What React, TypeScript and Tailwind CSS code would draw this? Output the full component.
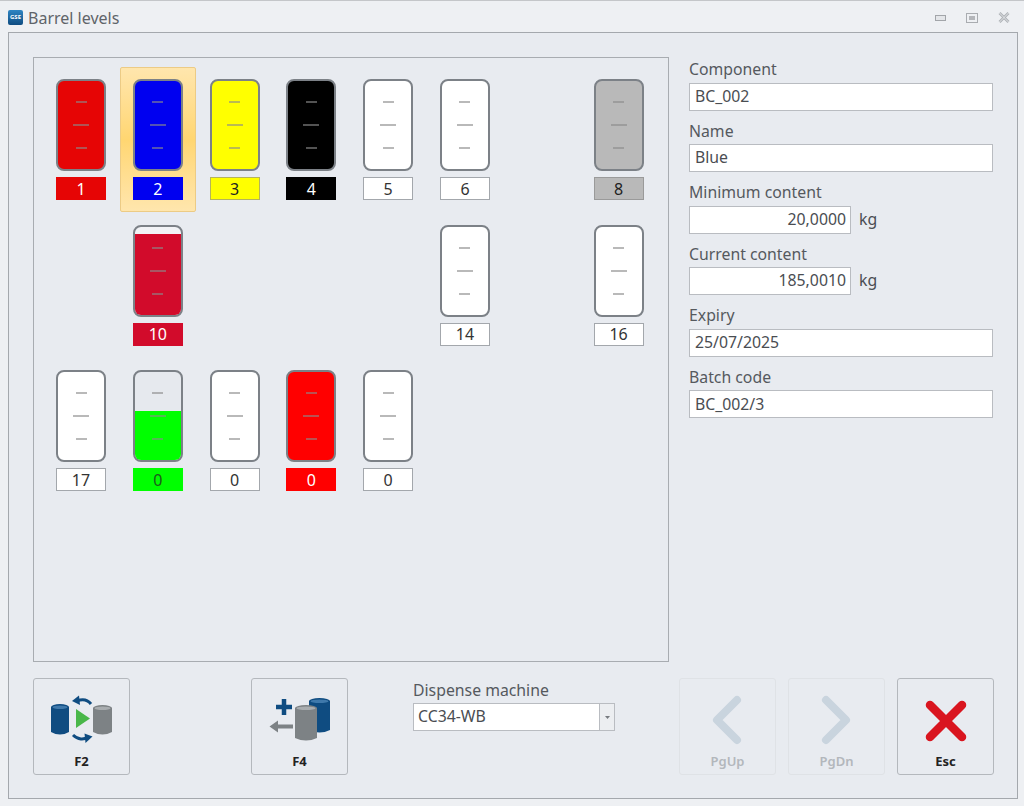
import React from "react";

type B = { col: number; label: string; color: string; text: string; fill?: number; selected?: boolean; emptyBg?: string };

const rows: (B | null)[][] = [
  [
    { col: 0, label: "1", color: "#e60505", text: "#ffffff" },
    { col: 1, label: "2", color: "#0000f0", text: "#ffffff", selected: true },
    { col: 2, label: "3", color: "#ffff00", text: "#222222" },
    { col: 3, label: "4", color: "#000000", text: "#ffffff" },
    { col: 4, label: "5", color: "#ffffff", text: "#333333" },
    { col: 5, label: "6", color: "#ffffff", text: "#333333" },
    null,
    { col: 7, label: "8", color: "#b9b9b9", text: "#222222" },
  ],
  [
    null,
    { col: 1, label: "10", color: "#d20b2b", text: "#ffffff", fill: 91, emptyBg: "#f2f3f6" },
    null,
    null,
    null,
    { col: 5, label: "14", color: "#ffffff", text: "#333333" },
    null,
    { col: 7, label: "16", color: "#ffffff", text: "#333333" },
  ],
  [
    { col: 0, label: "17", color: "#ffffff", text: "#333333" },
    { col: 1, label: "0", color: "#00ff00", text: "#1c5a1c", fill: 56, emptyBg: "#e6e9ee" },
    { col: 2, label: "0", color: "#ffffff", text: "#333333" },
    { col: 3, label: "0", color: "#ff0000", text: "#ffffff" },
    { col: 4, label: "0", color: "#ffffff", text: "#333333" },
    null,
    null,
    null,
  ],
];

function labelBorder(c: string) {
  if (c === "#ffffff") return "#a3a7ac";
  if (c === "#ffff00") return "#b5b35a";
  if (c === "#b9b9b9") return "#9a9a9a";
  return c;
}

function Barrel({ b }: { b: B }) {
  const partial = b.fill !== undefined;
  return (
    <div
      className={
        "w-[76px] h-[145px] flex flex-col items-center pt-[11px] rounded-[2px] border " +
        (b.selected
          ? "border-[#eccb85] bg-gradient-to-b from-[#ffe6ad] via-[#ffd671] to-[#ffe6ad]"
          : "border-transparent")
      }
    >
      <div
        className="relative w-[50px] h-[92px] rounded-[8px] border-2 border-[#7c8187] overflow-hidden flex flex-col justify-end"
        style={{ backgroundColor: partial ? b.emptyBg : b.color }}
      >
        {partial && <div style={{ height: `${b.fill}%`, backgroundColor: b.color }} />}
        <div className="absolute inset-0 flex flex-col items-center pt-[20px]">
          <div className="w-[11px] h-[2px] bg-[#8a8a8a]/60" />
          <div className="w-[16px] h-[2px] bg-[#8a8a8a]/60 mt-[21px]" />
          <div className="w-[11px] h-[2px] bg-[#8a8a8a]/60 mt-[21px]" />
        </div>
      </div>
      <div
        className="mt-[6px] w-[50px] h-[23px] border flex items-center justify-center text-[16px] leading-none"
        style={{ backgroundColor: b.color, color: b.text, borderColor: labelBorder(b.color) }}
      >
        {b.label}
      </div>
    </div>
  );
}

function Field({ label, value, unit, right }: { label: string; value: string; unit?: string; right?: boolean }) {
  return (
    <div className="flex flex-col h-[61.6px]">
      <div className="h-[25.5px] text-[15.8px] leading-[24px] text-[#55595e]">{label}</div>
      <div className="flex items-center">
        <div
          className={
            "h-[28px] bg-white border border-[#b9bcc1] text-[15.8px] text-[#4a4d52] flex items-center pl-[5px] pr-[4px] " +
            (right ? "w-[162px] justify-end" : "w-[304px]")
          }
        >
          {value}
        </div>
        {unit && <span className="ml-[8px] text-[15.8px] text-[#4a4d52]">{unit}</span>}
      </div>
    </div>
  );
}

function Cyl({ x, y, w, h, color, top }: { x: number; y: number; w: number; h: number; color: string; top: string }) {
  return (
    <g>
      <path
        d={`M${x} ${y + 3} V${y + h - 3} Q${x + w / 2} ${y + h + 2} ${x + w} ${y + h - 3} V${y + 3} Z`}
        fill={color}
      />
      <ellipse cx={x + w / 2} cy={y + 3} rx={w / 2} ry={3} fill={color} />
      <ellipse cx={x + w / 2} cy={y + 3.2} rx={w / 2 - 1.5} ry={1.7} fill={top} />
    </g>
  );
}

const BLUE = "#0f4c81";
const GRAY = "#7d8285";

function F2Icon() {
  return (
    <svg width="95" height="70" viewBox="0 0 95 70" className="block">
      <Cyl x={17} y={25} w={18} h={31} color={BLUE} top="#3f79ab" />
      <Cyl x={59} y={26} w={19} h={30} color={GRAY} top="#a9adb0" />
      <path d="M42 30 L56 39.5 L42 49 Z" fill="#49b749" />
      <path d="M57 25 C53 20 48 20 43 22" fill="none" stroke={BLUE} strokeWidth="3" />
      <path d="M38 22 L45 16.5 L46 26 Z" fill={BLUE} />
      <path d="M39 56 C44 61 50 61 54 58" fill="none" stroke={BLUE} strokeWidth="3" />
      <path d="M58.5 57.5 L51.5 64 L50.5 54.5 Z" fill={BLUE} />
    </svg>
  );
}

function F4Icon() {
  return (
    <svg width="95" height="70" viewBox="0 0 95 70" className="block">
      <Cyl x={57} y={19} w={21} h={35} color={BLUE} top="#3f79ab" />
      <Cyl x={43} y={26} w={22} h={36} color={GRAY} top="#a9adb0" />
      <path d="M32 20 V36 M24 28 H40" stroke={BLUE} strokeWidth="4.5" fill="none" />
      <path d="M26 45.5 H41 V49.5 H26 V53.5 L17.5 47.5 L26 41.5 Z" fill={GRAY} />
    </svg>
  );
}

function ActionButton({ label, disabled, className, children }: { label: string; disabled?: boolean; className?: string; children: React.ReactNode }) {
  return (
    <div
      className={
        "w-[97px] h-[97px] rounded-[3px] border flex flex-col items-center shrink-0 " +
        (disabled ? "border-[#dfe2e6] " : "border-[#b4b8bd] ") +
        (className ?? "")
      }
    >
      <div className="h-[70px] w-full flex items-center justify-center">{children}</div>
      <div
        className={
          "text-[13px] leading-[24px] " + (disabled ? "text-[#b3b7bc] font-semibold" : "text-[#222222] font-bold")
        }
      >
        {label}
      </div>
    </div>
  );
}

export default function App() {
  return (
    <div
      className="w-[1024px] h-[806px] bg-[#eef0f3] border-t border-[#c4c6c9] overflow-hidden flex flex-col"
      style={{ fontFamily: '"Noto Sans", "Open Sans", sans-serif' }}
    >
      <div className="h-[31px] shrink-0 flex items-center pt-[2px] pl-[8px] pr-[14px]">
        <div className="w-[15px] h-[15px] rounded-[2px] bg-gradient-to-b from-[#2f86c4] to-[#0f4c81] text-white text-[6px] font-bold flex items-center justify-center">
          GSE
        </div>
        <div className="ml-[5px] text-[16px] text-[#5f6469]">Barrel levels</div>
        <div className="ml-auto flex items-center gap-[20px]">
          <div className="w-[11px] h-[6px] border border-[#a2a5a9] bg-[#e4e6e9]" />
          <div className="w-[12px] h-[10px] border border-[#a9acb0] flex items-center justify-center">
            <div className="w-[6px] h-[4px] bg-[#b4b6ba]" />
          </div>
          <svg width="12" height="11" viewBox="0 0 12 11">
            <path d="M1.5 1 L10.5 10 M10.5 1 L1.5 10" stroke="#aeb1b5" strokeWidth="2.8" />
            <path d="M1.5 1 L10.5 10 M10.5 1 L1.5 10" stroke="#e8eaed" strokeWidth="0.9" />
          </svg>
        </div>
      </div>

      <div className="ml-[8px] w-[1010px] h-[767px] border border-[#a4a8ad] bg-[#e8ebf0] flex flex-col pl-[24px] pt-[24px]">
        <div className="flex h-[604px]">
          <div className="w-[636px] h-[605px] border border-[#a8acb1] pl-[9px] pt-[9px]">
            <div className="flex flex-col">
              {rows.map((row, i) => (
                <div key={i} className="grid grid-cols-[repeat(8,76.8px)] h-[145.5px]">
                  {row.map((b, j) => (b ? <Barrel key={j} b={b} /> : <div key={j} />))}
                </div>
              ))}
            </div>
          </div>
          <div className="ml-[20px] flex flex-col">
            <Field label="Component" value="BC_002" />
            <Field label="Name" value="Blue" />
            <Field label="Minimum content" value="20,0000" unit="kg" right />
            <Field label="Current content" value="185,0010" unit="kg" right />
            <Field label="Expiry" value="25/07/2025" />
            <Field label="Batch code" value="BC_002/3" />
          </div>
        </div>

        <div className="flex mt-[17px]">
          <ActionButton label="F2">
            <F2Icon />
          </ActionButton>
          <ActionButton label="F4" className="ml-[121px]">
            <F4Icon />
          </ActionButton>
          <div className="ml-[65px] w-[202px] flex flex-col">
            <div className="h-[25px] text-[15.8px] leading-[24px] text-[#55595e]">Dispense machine</div>
            <div className="h-[28px] bg-white border border-[#b9bcc1] flex items-stretch">
              <div className="flex-1 flex items-center px-[4px] text-[15.8px] text-[#4a4d52]">CC34-WB</div>
              <div className="w-[15px] border-l border-[#b9bcc1] bg-[#eceef1] flex items-center justify-center">
                <svg width="5" height="3" viewBox="0 0 5 3">
                  <path d="M0 0 H5 L2.5 3 Z" fill="#777b80" />
                </svg>
              </div>
            </div>
          </div>
          <ActionButton label="PgUp" disabled className="ml-[64px]">
            <svg width="95" height="70" viewBox="0 0 95 70" className="block">
              <path d="M57 21 L37 41 L57 61" fill="none" stroke="#c9d4de" strokeWidth="8" strokeLinecap="round" strokeLinejoin="round" />
            </svg>
          </ActionButton>
          <ActionButton label="PgDn" disabled className="ml-[12px]">
            <svg width="95" height="70" viewBox="0 0 95 70" className="block">
              <path d="M37 21 L57 41 L37 61" fill="none" stroke="#c9d4de" strokeWidth="8" strokeLinecap="round" strokeLinejoin="round" />
            </svg>
          </ActionButton>
          <ActionButton label="Esc" className="ml-[12px]">
            <svg width="95" height="70" viewBox="0 0 95 70" className="block">
              <path d="M32 26 L64 58 M64 26 L32 58" fill="none" stroke="#d9151f" strokeWidth="8.5" strokeLinecap="round" />
            </svg>
          </ActionButton>
        </div>
      </div>
    </div>
  );
}
